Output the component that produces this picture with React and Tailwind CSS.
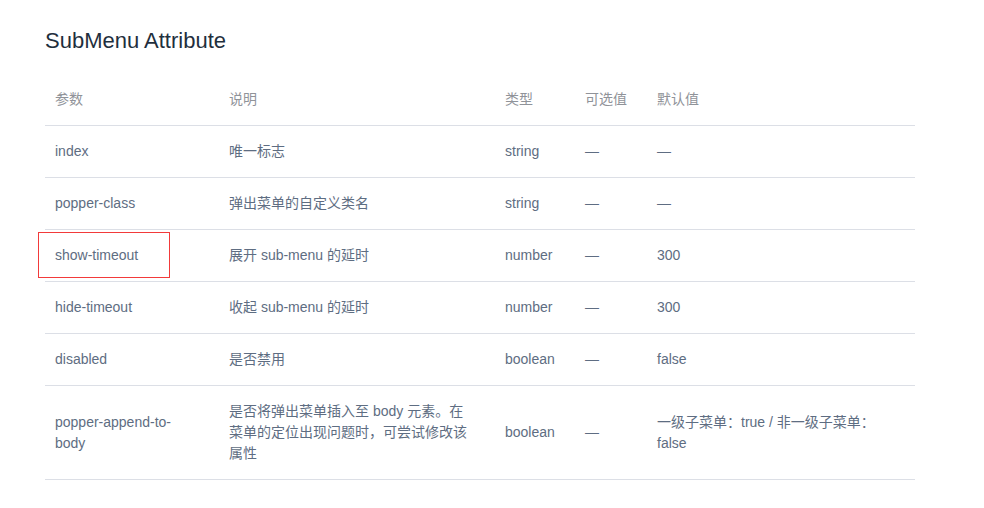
const rows = [
  ["index", "唯一标志", "string", "—", "—"],
  ["popper-class", "弹出菜单的自定义类名", "string", "—", "—"],
  ["show-timeout", "展开 sub-menu 的延时", "number", "—", "300"],
  ["hide-timeout", "收起 sub-menu 的延时", "number", "—", "300"],
  ["disabled", "是否禁用", "boolean", "—", "false"],
  [
    "popper-append-to-body",
    "是否将弹出菜单插入至 body 元素。在菜单的定位出现问题时，可尝试修改该属性",
    "boolean",
    "—",
    "一级子菜单：true / 非一级子菜单：false",
  ],
];

const heads = ["参数", "说明", "类型", "可选值", "默认值"];
const widths = ["w-[169px]", "w-[276px]", "w-[80px]", "w-[72px]", "w-[273px]"];

export default function App() {
  return (
    <div
      className="min-h-[508px] bg-white px-[45px] pt-[24px]"
      style={{ fontFamily: '"Liberation Sans", "Noto Sans CJK SC", sans-serif' }}
    >
      <h3 className="text-[22px] leading-[33px] font-normal text-[#1f2f3d]">SubMenu Attribute</h3>

      <table className="mt-[17px] w-[870px] table-fixed border-collapse text-[14px] leading-[21px]">
        <thead>
          <tr>
            {heads.map((h, i) => (
              <th
                key={h}
                className={`${widths[i]} border-b border-[#dcdfe6] py-[15px] pr-[15px] text-left font-normal text-[#909399] ${i === 0 ? "pl-[10px]" : "pl-[15px]"}`}
              >
                {h}
              </th>
            ))}
          </tr>
        </thead>
        <tbody>
          {rows.map((r) => (
            <tr key={r[0]}>
              {r.map((c, i) => (
                <td
                  key={i}
                  className={`relative border-b border-[#dcdfe6] py-[15px] pr-[15px] text-left align-middle text-[#5e6d82] ${i === 0 ? "pl-[10px]" : "pl-[15px]"}`}
                >
                  {c}
                  {i === 0 && r[0] === "show-timeout" && (
                    <div className="absolute left-[-7px] top-[2px] h-[46px] w-[132px] border border-[#f23a3a]"></div>
                  )}
                </td>
              ))}
            </tr>
          ))}
        </tbody>
      </table>
    </div>
  );
}
